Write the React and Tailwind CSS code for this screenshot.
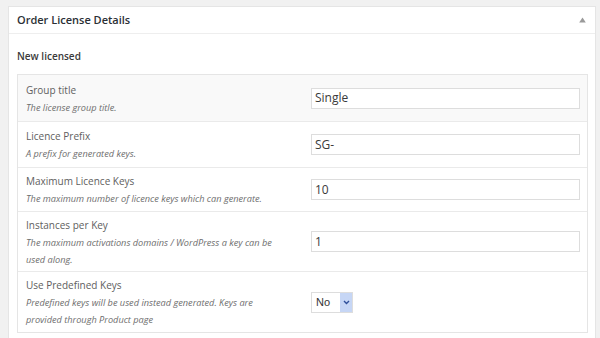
export default function App() {
  const rows = [
    { label: "Group title", desc: "The license group title.", value: "Single", h: "h-[47px]", bg: "bg-[#f9f9f9]" },
    { label: "Licence Prefix", desc: "A prefix for generated keys.", value: "SG-", h: "h-[46px]", bg: "bg-white" },
    { label: "Maximum Licence Keys", desc: "The maximum number of licence keys which can generate.", value: "10", h: "h-[44px]", bg: "bg-white" },
    { label: "Instances per Key", desc: "The maximum activations domains / WordPress a key can be used along.", value: "1", h: "h-[60px]", bg: "bg-white" },
  ];
  return (
    <div className="w-[600px] h-[338px] overflow-hidden bg-[#f1f1f1] pt-[6px] pl-[8px] pr-[4px]" style={{ fontFamily: '"Open Sans", sans-serif' }}>
      <div className="bg-white border border-[#e5e5e5] h-[340px]">
        <div className="h-[27px] border-b border-[#eeeeee] flex items-center justify-between pl-[8px] pr-[9px]">
          <span className="text-[11px] font-semibold text-[#2b3035]">Order License Details</span>
          <svg width="7" height="6" viewBox="0 0 7 6"><path d="M3.5 0.5 L6.8 5.5 L0.2 5.5 Z" fill="#9a9a9a" /></svg>
        </div>
        <div className="pl-[8px] pt-[15px] text-[10px] font-semibold text-[#3a3a3a]">New licensed</div>
        <div className="ml-[8px] mr-[7px] mt-[10px] border border-[#e5e5e5]">
          {rows.map((r, i) => (
            <div key={i} className={`${r.h} ${r.bg} flex items-center border-b border-[#eaeaea]`}>
              <div className="w-[293px] pl-[8px] pr-[30px] pt-[2px]">
                <div className="text-[10px] text-[#606060] leading-[14px]">{r.label}</div>
                <div className="text-[9.2px] italic text-[#6e6e6e] leading-[17px] mt-[2px]">{r.desc}</div>
              </div>
              <div className="flex-1 pr-[7px]">
                <div className="h-[21px] border border-[#dddddd] bg-white flex items-center pl-[3px] text-[12px] text-[#3a3a3a]">{r.value}</div>
              </div>
            </div>
          ))}
          <div className="h-[60px] bg-white flex items-center">
            <div className="w-[293px] pl-[8px] pr-[30px] pt-[2px]">
              <div className="text-[10px] text-[#606060] leading-[14px]">Use Predefined Keys</div>
              <div className="text-[9.2px] italic text-[#6e6e6e] leading-[17px] mt-[2px]">Predefined keys will be used instead generated. Keys are provided through Product page</div>
            </div>
            <div className="flex-1">
              <div className="w-[42px] h-[21px] border border-[#dddddd] bg-white flex items-center">
                <span className="pl-[4px] text-[11px] text-[#333] flex-1" style={{ fontFamily: '"Liberation Sans", sans-serif' }}>No</span>
                <div className="w-[12px] h-full bg-[#c6d6f5] flex items-center justify-center">
                  <svg width="7" height="5" viewBox="0 0 7 5"><path d="M1 1 L3.5 3.5 L6 1" stroke="#2f4f9a" strokeWidth="1.4" fill="none" /></svg>
                </div>
              </div>
            </div>
          </div>
        </div>
      </div>
    </div>
  );
}
